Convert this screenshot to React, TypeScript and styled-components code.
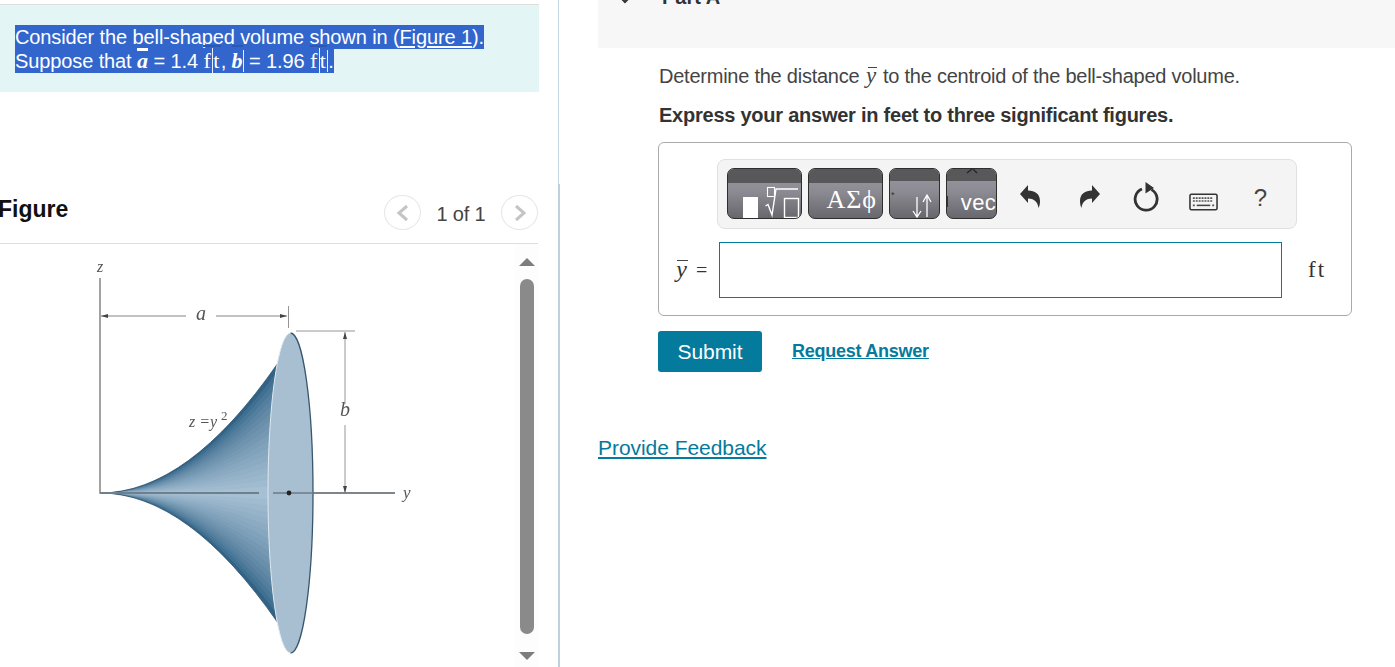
import React from "react";
import styled, { createGlobalStyle } from "styled-components";

const GlobalStyle = createGlobalStyle`
  html, body {
    margin: 0;
    padding: 0;
    height: 667px;
    overflow: hidden;
    background: #fff;
    font-family: "Liberation Sans", Arial, sans-serif;
  }
`;

const teal = "#047a9c";
const mathFont = `"Liberation Serif", "Times New Roman", serif`;

const Page = styled.div`
  display: flex;
  width: 1395px;
  height: 667px;
  overflow: hidden;
`;

const LeftPane = styled.div`
  width: 557px;
  flex: none;
  padding-top: 4px;
  box-sizing: border-box;
`;

const Intro = styled.div`
  width: 539px;
  height: 88px;
  box-sizing: border-box;
  border-top: 1px solid #dedede;
  background: #e4f5f6;
  padding: 20px 0 0 15px;
`;

const Selected = styled.div`
  width: fit-content;
  height: 24px;
  line-height: 24px;
  font-size: 20px;
  letter-spacing: -0.11px;
  color: #fff;
  background: #3266cd;
  white-space: nowrap;
`;

const SelectedLink = styled.span`
  text-decoration: underline;
  text-underline-offset: 2px;
`;

const SelMath = styled.span<{ $bold?: boolean }>`
  position: relative;
  font-family: ${mathFont};
  font-size: 22px;
  line-height: 20px;
  font-style: ${(p) => (p.$bold ? "italic" : "normal")};
  font-weight: ${(p) => (p.$bold ? 700 : 400)};
  letter-spacing: ${(p) => (p.$bold ? "0" : "1.4px")};
`;

const SelMathBar = styled(SelMath)<{ $light?: boolean }>`
  &::before {
    content: "";
    position: absolute;
    left: 0;
    right: 0;
    top: ${(p) => (p.$light ? "0" : "-3px")};
    height: ${(p) => (p.$light ? "3px" : "2px")};
    background: ${(p) => (p.$light ? "#fff" : "#2b58b0")};
  }
`;

const Cut = styled.span`
  border-left: 1px solid #e8eefa;
`;

const FigureHead = styled.div`
  width: 538px;
  height: 53px;
  margin-top: 99px;
  box-sizing: border-box;
  border-bottom: 1px solid #dedede;
  display: flex;
  align-items: flex-start;
  justify-content: space-between;
`;

const FigureTitle = styled.h2`
  margin: 5px 0 0 -2px;
  font-size: 23px;
  line-height: 26px;
  font-weight: 700;
  color: #111;
`;

const Pager = styled.div`
  display: flex;
  align-items: center;
  margin-top: 4px;
`;

const PageCount = styled.span`
  font-size: 20px;
  color: #444;
  width: 80px;
  text-align: center;
  letter-spacing: -0.2px;
  position: relative;
  top: 2px;
`;

const PageButton = styled.div`
  width: 37px;
  height: 35px;
  box-sizing: border-box;
  border: 1px solid #e6e6e6;
  border-radius: 50%;
  display: flex;
  align-items: center;
  justify-content: center;
`;

const FigureBody = styled.div`
  display: flex;
  width: 538px;
  height: 423px;
`;

const FigureCanvas = styled.div`
  width: 515px;
  flex: none;
`;

const Scroller = styled.div`
  width: 23px;
  background: #fdfdfd;
  display: flex;
  flex-direction: column;
  align-items: center;
  padding: 14px 0 7px;
  box-sizing: border-box;
`;

const ScrollArrow = styled.div<{ $down?: boolean }>`
  width: 0;
  height: 0;
  border-left: 8px solid transparent;
  border-right: 8px solid transparent;
  ${(p) =>
    p.$down ? "border-top: 8px solid #7d7d7d;" : "border-bottom: 8px solid #7d7d7d;"}
`;

const ScrollThumb = styled.div`
  width: 14px;
  flex: 1;
  margin: 13px 0 18px;
  border-radius: 7px;
  background: #8a8a8a;
`;

const Divider = styled.div`
  width: 3px;
  flex: none;
  display: flex;
  flex-direction: column;
  align-items: flex-end;
`;

const DividerTop = styled.div`
  width: 1px;
  height: 184px;
  margin-right: 1px;
  background: #c6d8e6;
`;

const DividerBottom = styled.div`
  width: 2px;
  flex: 1;
  margin-right: 0;
  background: #bcd0e2;
`;

const RightPane = styled.div`
  flex: 1;
  min-width: 0;
  padding-left: 38px;
`;

const PartHead = styled.div`
  height: 48px;
  background: #f7f7f7;
  overflow: hidden;
  display: flex;
  align-items: flex-start;
  padding-left: 20px;
`;

const PartChevron = styled.svg`
  width: 14px;
  height: 6px;
  margin-top: 0;
`;

const PartTitle = styled.div`
  margin: -15px 0 0 30px;
  font-size: 20px;
  line-height: 24px;
  font-weight: 700;
  color: #333;
`;

const Question = styled.div`
  padding: 15px 43px 0 60px;
`;

const Prompt = styled.p`
  margin: 0 0 0 1px;
  font-size: 20px;
  line-height: 26px;
  letter-spacing: -0.24px;
  color: #444;
`;

const Hint = styled.p`
  margin: 13px 0 0 1px;
  font-size: 20px;
  line-height: 26px;
  letter-spacing: -0.24px;
  font-weight: 700;
  color: #333;
`;

const MathVar = styled.span`
  display: inline-block;
  position: relative;
  width: 11px;
  margin: 0 1px;
  text-align: center;
  font-family: ${mathFont};
  font-size: 23px;
  line-height: 20px;
  font-style: italic;
  letter-spacing: 0;

  &::before {
    content: "";
    position: absolute;
    left: 2px;
    right: 0;
    top: 1px;
    height: 1px;
    background: #444;
  }
`;

const AnswerBox = styled.div`
  margin-top: 14px;
  height: 174px;
  box-sizing: border-box;
  border: 1px solid #aaa;
  border-radius: 6px;
  padding: 16px 25px 0 18px;
`;

const Toolbar = styled.div`
  margin-left: 40px;
  width: 580px;
  height: 70px;
  box-sizing: border-box;
  border: 1px solid #e0e0e0;
  border-radius: 8px;
  background: #f4f4f4;
  display: flex;
  align-items: flex-start;
  padding: 8px 0 0 9px;
`;

const TemplateButton = styled.div<{ $wide?: boolean }>`
  width: ${(p) => (p.$wide ? "75px" : "51px")};
  height: 51px;
  flex: none;
  margin-right: 6px;
  box-sizing: border-box;
  border: 1px solid #2e2e2e;
  border-radius: 7px;
  overflow: hidden;
  background: linear-gradient(#9c9aa3 0, #8a8890 50%, #68676c 100%);
  color: #fff;
  display: flex;
  flex-direction: column;
`;

const ButtonBand = styled.div<{ $short?: boolean }>`
  height: ${(p) => (p.$short ? "12px" : "14px")};
  flex: none;
  background: #58585b;
  display: flex;
  justify-content: center;
  overflow: hidden;
`;

const ButtonFace = styled.div`
  flex: 1;
  display: flex;
  align-items: flex-end;
  justify-content: flex-end;
  position: relative;
  min-height: 0;
`;

const SymbolText = styled.span`
  font-family: ${mathFont};
  font-size: 26px;
  line-height: 36px;
  margin-right: 5px;
  letter-spacing: 1px;
`;

const VecText = styled.span`
  font-size: 22px;
  line-height: 30px;
  margin-right: 0;
  letter-spacing: 0.3px;
`;

const Star = styled.span`
  position: absolute;
  left: 1px;
  top: 9px;
  font-size: 9px;
  line-height: 10px;
  color: #333;
`;

const SideTick = styled.span`
  position: absolute;
  left: 0;
  top: 15px;
  width: 1px;
  height: 11px;
  background: #333;
`;

const ToolIcons = styled.div`
  display: flex;
  align-items: center;
  height: 50px;
  margin-left: 1px;
`;

const ToolIcon = styled.div<{ $drop: number }>`
  width: 57px;
  height: 40px;
  flex: none;
  box-sizing: border-box;
  padding-top: ${(p) => p.$drop * 2}px;
  display: flex;
  align-items: center;
  justify-content: center;
  color: #333;
`;

const HelpMark = styled.span`
  font-size: 24px;
  color: #444;
`;

const UndoSvg = styled.svg<{ $flip?: boolean }>`
  width: 22px;
  height: 26px;
  ${(p) => (p.$flip ? "transform: scaleX(-1);" : "margin-left: -5px;")}
`;

const AnswerRow = styled.div`
  margin-top: 13px;
  display: flex;
  align-items: center;
`;

const AnswerLabel = styled.div`
  width: 42px;
  flex: none;
  font-size: 20px;
  color: #333;
  white-space: nowrap;
  font-family: ${mathFont};
`;

const LabelVar = styled(MathVar)`
  margin: 0 3px 0 -2px;
  font-size: 24px;
  width: 13px;
`;

const AnswerInput = styled.div`
  width: 563px;
  height: 56px;
  flex: none;
  box-sizing: border-box;
  border: 1px solid ${teal};
`;

const Unit = styled.span`
  margin-left: 26px;
  font-family: ${mathFont};
  font-size: 23px;
  letter-spacing: 2px;
  color: #333;
`;

const Actions = styled.div`
  margin-top: 15px;
  display: flex;
  align-items: center;
`;

const SubmitButton = styled.div`
  width: 104px;
  height: 41px;
  border-radius: 3px;
  background: ${teal};
  color: #fff;
  font-size: 21px;
  line-height: 41px;
  text-align: center;
  letter-spacing: -0.1px;
`;

const RequestLink = styled.a`
  margin-left: 30px;
  font-size: 18px;
  font-weight: 700;
  letter-spacing: -0.25px;
  color: ${teal};
  text-decoration: underline;
`;

const FeedbackLink = styled.a`
  display: block;
  width: fit-content;
  margin: 63px 0 0 0;
  font-size: 21px;
  line-height: 26px;
  letter-spacing: -0.05px;
  color: ${teal};
  text-decoration: underline;
  text-decoration-thickness: 2px;
  text-underline-offset: 2px;
`;

const Chevron = ({ flip }: { flip?: boolean }) => (
  <svg width="14" height="20" viewBox="0 0 14 20">
    <path
      d={flip ? "M3 3 L11 10 L3 17" : "M11 3 L3 10 L11 17"}
      fill="none"
      stroke="#c4c4c4"
      strokeWidth="3"
    />
  </svg>
);

// shading bands of the solid, dark at the rim and light along the axis
const bandColor = (k: number) => {
  const edge = [48, 98, 134];
  const mid = [170, 195, 214];
  const t = Math.pow(1 - k, 0.7);
  return `rgb(${edge.map((c, i) => Math.round(c + (mid[i] - c) * t)).join(",")})`;
};
const bands = Array.from({ length: 18 }, (_, i) => 1 - i / 18);

// the bell-shaped solid, drawn in page coordinates
const BellFigure = () => (
  <svg width="515" height="423" viewBox="0 244 515 423" fontFamily={mathFont}>
    <defs>
      <filter id="soft">
        <feGaussianBlur stdDeviation="0.5" />
      </filter>
    </defs>
    <g filter="url(#soft)">
      <path d="M100 278 V493 H395" fill="none" stroke="#8c8c8c" strokeWidth="1.6" />
      {bands.map((k) => (
        <path
          key={k}
          d={`M100 493 Q188 ${493} 278 ${493 - 130 * k} L278 ${493 + 130 * k} Q188 493 100 493 Z`}
          fill={bandColor(k)}
        />
      ))}
      <path d="M100 493 Q188 493 278 363 M100 493 Q188 493 278 623" fill="none" stroke="#33566f" strokeWidth="0.8" />
      <path d="M100 493 H259" stroke="#6f7f8c" strokeWidth="2" />
      <ellipse cx="290.5" cy="493" rx="22.5" ry="160" fill="#a8bfd2" />
      <path d="M290.5 333 A22.5 160 0 0 1 290.5 653" fill="none" stroke="#38566c" strokeWidth="1.3" />
      <path d="M290.5 333 A22.5 160 0 0 0 290.5 653" fill="none" stroke="#dfe9f0" strokeWidth="1" />
      <path d="M273 493 H395" stroke="#6f7a84" strokeWidth="1.6" />
      <circle cx="289" cy="493" r="2.4" fill="#222" />
      <path d="M101 316 H186 M216 316 H287" stroke="#777" strokeWidth="0.9" />
      <path d="M101 316 L108 314 V318 Z M287 316 L280 314 V318 Z" fill="#444" />
      <path d="M288.5 306 V328 M296 331 H355 M345 332 V404 M345 425 V492" stroke="#8a8a8a" strokeWidth="0.9" fill="none" />
      <path d="M345 332 L343 339 H347 Z M345 493 L343 486 H347 Z" fill="#444" />
      <g fontStyle="italic" fill="#555">
        <text x="97" y="272" fontSize="16">z</text>
        <text x="196" y="320" fontSize="20">a</text>
        <text x="340" y="416" fontSize="20">b</text>
        <text x="403" y="498" fontSize="17">y</text>
        <text x="189" y="427" fontSize="16">z =y</text>
        <text x="221" y="420" fontSize="13" fontStyle="normal">2</text>
      </g>
    </g>
  </svg>
);

const RadicalIcon = () => (
  <svg width="60" height="36" viewBox="0 0 60 36" fill="none" stroke="#fff">
    <rect x="2" y="15" width="15" height="21" fill="#fff" stroke="none" />
    <rect x="26.5" y="5.5" width="7" height="9" strokeWidth="1.1" />
    <path d="M24.5 24 L27 22.5 L31 33 L35 7 H57" strokeWidth="1.4" />
    <rect x="43.5" y="16.5" width="14" height="19" strokeWidth="1.4" />
  </svg>
);

const ArrowsIcon = () => (
  <svg width="24" height="26" viewBox="0 0 24 26" fill="none" stroke="#fff" strokeWidth="1.3" style={{ marginRight: 6 }}>
    <path d="M8 5 V24 M4 19 L8 25 L12 19" />
    <path d="M18 25 V4 M14 10 L18 3 L22 10" />
  </svg>
);

const UndoIcon = ({ flip }: { flip?: boolean }) => (
  <UndoSvg viewBox="0 0 22 26" $flip={flip}>
    <path
      d="M1 11 L9 2 V7.5 C16 7.5 21 11 21 18 C21 21 20.5 23 19.5 25 C19 20 16 15.5 9 15.5 V20 Z"
      fill="#333"
    />
  </UndoSvg>
);

const ResetIcon = () => (
  <svg width="28" height="32" viewBox="0 0 28 32" fill="none">
    <path d="M18.5 8.6 A11 11 0 1 1 9 8" stroke="#333" strokeWidth="2.8" />
    <path d="M12.5 1 L21 7 L12.5 12.5 Z" fill="#333" />
  </svg>
);

const KeyboardIcon = () => (
  <svg width="29" height="18" viewBox="0 0 30 18" fill="none">
    <rect x="1" y="1" width="28" height="16" rx="1.5" stroke="#333" strokeWidth="1.6" />
    <path d="M4 5 H25" stroke="#555" strokeWidth="1.6" strokeDasharray="2 1" />
    <path d="M4 8 H25" stroke="#555" strokeWidth="1.6" strokeDasharray="2 1" />
    <path d="M8 12.5 H22" stroke="#444" strokeWidth="1.6" />
    <path d="M4 12.5 H6 M24 12.5 H26" stroke="#555" strokeWidth="1.6" />
  </svg>
);

const App: React.FC = () => {
  return (
    <>
      <GlobalStyle />
      <Page>
        <LeftPane>
          <Intro>
            <Selected>
              Consider the bell-shaped volume shown in (
              <SelectedLink>Figure 1</SelectedLink>).
            </Selected>
            <Selected>
              Suppose that <SelMathBar $bold $light>a</SelMathBar> = 1.4{" "}
              <SelMathBar>f<Cut>t</Cut></SelMathBar>,{" "}
              <SelMathBar $bold>b</SelMathBar>
              <Cut /> = 1.96 <SelMathBar>f<Cut>t</Cut></SelMathBar>
              <Cut />.
            </Selected>
          </Intro>
          <FigureHead>
            <FigureTitle>Figure</FigureTitle>
            <Pager>
              <PageButton>
                <Chevron />
              </PageButton>
              <PageCount>1 of 1</PageCount>
              <PageButton>
                <Chevron flip />
              </PageButton>
            </Pager>
          </FigureHead>
          <FigureBody>
            <FigureCanvas>
              <BellFigure />
            </FigureCanvas>
            <Scroller>
              <ScrollArrow />
              <ScrollThumb />
              <ScrollArrow $down />
            </Scroller>
          </FigureBody>
        </LeftPane>
        <Divider>
          <DividerTop />
          <DividerBottom />
        </Divider>
        <RightPane>
          <PartHead>
            <PartChevron viewBox="0 0 14 6">
              <path d="M3 -2 L7 2 L11 -2" fill="none" stroke="#333" strokeWidth="2" />
            </PartChevron>
            <PartTitle>Part A</PartTitle>
          </PartHead>
          <Question>
            <Prompt>
              Determine the distance <MathVar>y</MathVar> to the centroid of the bell-shaped
              volume.
            </Prompt>
            <Hint>Express your answer in feet to three significant figures.</Hint>
            <AnswerBox>
              <Toolbar>
                <TemplateButton $wide>
                  <ButtonBand />
                  <ButtonFace>
                    <RadicalIcon />
                  </ButtonFace>
                </TemplateButton>
                <TemplateButton $wide>
                  <ButtonBand />
                  <ButtonFace>
                    <SymbolText>ΑΣϕ</SymbolText>
                  </ButtonFace>
                </TemplateButton>
                <TemplateButton>
                  <ButtonBand $short />
                  <ButtonFace>
                    <Star>*</Star>
                    <ArrowsIcon />
                  </ButtonFace>
                </TemplateButton>
                <TemplateButton>
                  <ButtonBand $short>
                    <svg width="12" height="5" viewBox="0 0 12 5">
                      <path d="M1 4 L6 0 M7 0 L11 4" stroke="#222" strokeWidth="1.2" />
                    </svg>
                  </ButtonBand>
                  <ButtonFace>
                    <SideTick />
                    <VecText>vec</VecText>
                  </ButtonFace>
                </TemplateButton>
                <ToolIcons>
                  <ToolIcon $drop={3}>
                    <UndoIcon />
                  </ToolIcon>
                  <ToolIcon $drop={3}>
                    <UndoIcon flip />
                  </ToolIcon>
                  <ToolIcon $drop={4}>
                    <ResetIcon />
                  </ToolIcon>
                  <ToolIcon $drop={9}>
                    <KeyboardIcon />
                  </ToolIcon>
                  <ToolIcon $drop={5}>
                    <HelpMark>?</HelpMark>
                  </ToolIcon>
                </ToolIcons>
              </Toolbar>
              <AnswerRow>
                <AnswerLabel>
                  <LabelVar>y</LabelVar> =
                </AnswerLabel>
                <AnswerInput />
                <Unit>ft</Unit>
              </AnswerRow>
            </AnswerBox>
            <Actions>
              <SubmitButton>Submit</SubmitButton>
              <RequestLink>Request Answer</RequestLink>
            </Actions>
          </Question>
          <FeedbackLink>Provide Feedback</FeedbackLink>
        </RightPane>
      </Page>
    </>
  );
};

export default App;
